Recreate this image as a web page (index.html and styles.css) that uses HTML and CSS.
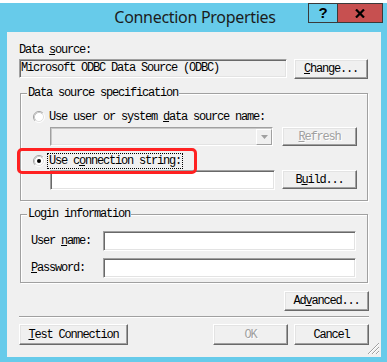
FILE: index.html
```html
<!DOCTYPE html>
<html lang="en">
<head>
    <meta charset="UTF-8">
    <meta name="viewport" content="width=device-width, initial-scale=1.0">
    <title>Connection Properties</title>
    <link rel="stylesheet" href="styles.css">
</head>
<body>
    <div class="topstrip"></div>
    <div class="titlebar">
        <div></div>
        <div class="title">Connection Properties</div>
        <div class="caption-btns">
            <div class="cap-help">?</div>
            <div class="cap-close">
                <svg width="10" height="9" viewBox="0 0 10 9"><path d="M1 0.5 L9 8.5 M9 0.5 L1 8.5" stroke="#000" stroke-width="2.2"/></svg>
            </div>
        </div>
    </div>

    <div class="client">
        <div class="label">Data <u>s</u>ource:</div>
        <div class="row ds-row">
            <div class="field readonly">Microsoft ODBC Data Source (ODBC)</div>
            <button class="btn btn-change"><u>C</u>hange...</button>
        </div>

        <div class="group spec">
            <span class="legend">Data source specification</span>
            <div class="radio-row">
                <svg class="radio" width="12" height="12" viewBox="0 0 12 12">
                    <circle cx="6" cy="6" r="5" fill="#fff"/>
                    <path d="M2.11 9.89 A5.5 5.5 0 0 1 9.89 2.11" stroke="#a0a0a0" fill="none"/>
                    <path d="M9.89 2.11 A5.5 5.5 0 0 1 2.11 9.89" stroke="#fff" fill="none"/>
                    <path d="M2.82 9.18 A4.5 4.5 0 0 1 9.18 2.82" stroke="#c8c8c8" fill="none"/>
                    <path d="M9.18 2.82 A4.5 4.5 0 0 1 2.82 9.18" stroke="#e3e3e3" fill="none"/>
                </svg>
                <span class="radio-text">Use user or system <u>d</u>ata source name:</span>
            </div>
            <div class="row sub-row">
                <div class="combo">
                    <span class="combo-btn">
                        <svg width="7" height="4" viewBox="0 0 7 4"><path d="M0 0 H7 L3.5 4 Z" fill="#a0a0a0"/></svg>
                    </span>
                </div>
                <button class="btn btn-side disabled"><u>R</u>efresh</button>
            </div>
            <div class="radio-row second">
                <svg class="radio" width="12" height="12" viewBox="0 0 12 12">
                    <circle cx="6" cy="6" r="5" fill="#fff"/>
                    <path d="M2.11 9.89 A5.5 5.5 0 0 1 9.89 2.11" stroke="#a0a0a0" fill="none"/>
                    <path d="M9.89 2.11 A5.5 5.5 0 0 1 2.11 9.89" stroke="#fff" fill="none"/>
                    <path d="M2.82 9.18 A4.5 4.5 0 0 1 9.18 2.82" stroke="#c8c8c8" fill="none"/>
                    <path d="M9.18 2.82 A4.5 4.5 0 0 1 2.82 9.18" stroke="#e3e3e3" fill="none"/>
                    <circle cx="6" cy="6" r="2" fill="#000"/>
                </svg>
                <span class="radio-text focus">Use c<u>o</u>nnection string:</span>
            </div>
            <div class="row sub-row conn-row">
                <div class="field conn-field"></div>
                <button class="btn btn-side">B<u>u</u>ild...</button>
            </div>
        </div>

        <div class="group login">
            <span class="legend">Login information</span>
            <div class="login-row">
                <span class="login-label">User <u>n</u>ame:</span>
                <div class="field login-field"></div>
            </div>
            <div class="login-row">
                <span class="login-label"><u>P</u>assword:</span>
                <div class="field login-field"></div>
            </div>
        </div>

        <div class="row adv-row">
            <button class="btn btn-adv">Ad<u>v</u>anced...</button>
        </div>

        <div class="separator"></div>

        <div class="row bottom-row">
            <button class="btn btn-test"><u>T</u>est Connection</button>
            <button class="btn btn-ok disabled">OK</button>
            <button class="btn btn-cancel">Cancel</button>
        </div>

        <!-- annotation drawn over the dialog -->
        <div class="highlight"></div>

        <svg class="grip" width="13" height="13" viewBox="0 0 13 13" shape-rendering="crispEdges">
            <path d="M12 1 L1 12 M12 5 L5 12 M12 9 L9 12" stroke="#a0a0a0"/>
            <path d="M12 2 L2 12 M12 6 L6 12 M12 10 L10 12" stroke="#fff"/>
        </svg>
    </div>
</body>
</html>
```

FILE: styles.css
```css
* {
    box-sizing: border-box;
}
body {
    margin: 0;
    width: 387px;
    height: 362px;
    overflow: hidden;
    background: #67cbea;
    font-family: "Liberation Mono", monospace;
    font-size: 12px;
    letter-spacing: -1.2px;
    color: #000;
}
.topstrip {
    height: 3px;
    background: #fff;
}
.titlebar {
    display: grid;
    grid-template-columns: 1fr auto 1fr;
    height: 29px;
    padding: 0 4px 0 7px;
}
.title {
    font-family: "Noto Sans", sans-serif;
    font-size: 16px;
    letter-spacing: -0.3px;
    line-height: 22px;
    padding-top: 3px;
    color: #1c1c1c;
}
.caption-btns {
    display: flex;
    justify-content: flex-end;
    align-items: flex-start;
}
.cap-help {
    width: 29px;
    height: 20px;
    border: 1px solid #3a3a3a;
    border-right: none;
    font-family: "Liberation Sans", sans-serif;
    font-weight: bold;
    font-size: 15px;
    letter-spacing: 0;
    line-height: 18px;
    text-align: center;
}
.cap-close {
    width: 46px;
    height: 20px;
    background: #c75050;
    border: 1px solid #3a3a3a;
    display: flex;
    align-items: center;
    justify-content: center;
}
.client {
    position: relative;
    width: 374px;
    height: 325px;
    margin-left: 7px;
    padding: 12px 12px 0;
    background: #f0f0f0;
}
.label {
    height: 13px;
    line-height: 13px;
}
.row {
    display: flex;
    align-items: flex-start;
}
.ds-row {
    margin-top: 2px;
    gap: 7px;
}
.field {
    height: 19px;
    background: #fff;
    border: 1px solid;
    border-color: #a0a0a0 #fff #fff #a0a0a0;
    box-shadow: inset 1px 1px 0 #696969, inset -1px -1px 0 #e3e3e3;
}
.readonly {
    width: 268px;
    background: #f0f0f0;
    padding-left: 1px;
    line-height: 15px;
    padding-top: 1px;
    white-space: nowrap;
}
.btn {
    display: flex;
    align-items: center;
    justify-content: center;
    height: 20px;
    padding: 0;
    margin: 0;
    font: inherit;
    letter-spacing: inherit;
    color: #000;
    background: #f0f0f0;
    border: 1px solid;
    border-color: #fff #696969 #696969 #fff;
    box-shadow: inset -1px -1px 0 #a0a0a0, inset 1px 1px 0 #e3e3e3;
}
.btn.disabled {
    color: #a0a0a0;
    text-shadow: 1px 1px 0 #fff;
}
.btn-change {
    width: 74px;
}
.group {
    position: relative;
    margin: 14px 1px 0;
    border: 1px solid #a0a0a0;
    box-shadow: inset 1px 1px 0 #fff, 1px 1px 0 #fff;
}
.legend {
    position: absolute;
    top: -8px;
    left: 6px;
    padding: 0 1px;
    line-height: 14px;
    background: #f0f0f0;
}
.spec {
    padding: 16px 0 10px;
}
.radio-row {
    display: flex;
    align-items: center;
    height: 14px;
    padding-left: 12px;
}
.radio-row.second {
    margin-top: 8px;
}
.radio {
    flex: none;
}
.radio-text {
    margin-left: 3px;
    padding: 0 1px;
    line-height: 14px;
}
.radio-text.focus {
    outline: 1px dotted #000;
}
.sub-row {
    margin-top: 3px;
    padding-left: 29px;
    gap: 9px;
}
.conn-row {
    margin-top: 2px;
    gap: 7px;
}
.combo {
    width: 223px;
    height: 19px;
    background: #f0f0f0;
    border: 1px solid;
    border-color: #a0a0a0 #fff #fff #a0a0a0;
    box-shadow: inset 1px 1px 0 #c8c8c8, inset -1px -1px 0 #e3e3e3;
    display: flex;
    justify-content: flex-end;
    padding: 1px 0 0 0;
}
.combo-btn {
    width: 16px;
    height: 16px;
    display: flex;
    align-items: center;
    justify-content: center;
    background: #f0f0f0;
    border: 1px solid;
    border-color: #fff #a0a0a0 #a0a0a0 #fff;
}
.btn-side {
    width: 75px;
    height: 19px;
}
.conn-field {
    width: 225px;
    height: 20px;
}
.login {
    margin-top: 13px;
    padding: 16px 11px 4px 10px;
}
.login-row {
    display: flex;
    height: 20px;
}
.login-row + .login-row {
    margin-top: 7px;
}
.login-label {
    width: 72px;
    line-height: 20px;
}
.login-field {
    width: 253px;
    height: 20px;
}
.adv-row {
    margin-top: 8px;
    justify-content: flex-end;
}
.btn-adv {
    width: 85px;
}
.separator {
    margin-top: 5px;
    height: 2px;
    border-top: 1px solid #a0a0a0;
    border-bottom: 1px solid #fff;
}
.bottom-row {
    margin-top: 6px;
}
.bottom-row .btn {
    height: 21px;
}
.btn-test {
    width: 109px;
}
.btn-ok {
    width: 75px;
    margin-left: auto;
}
.btn-cancel {
    width: 75px;
    margin-left: 6px;
}
.highlight {
    position: absolute;
    left: 10px;
    top: 116px;
    width: 180px;
    height: 26px;
    border: 3px solid #ff2121;
    border-radius: 5px;
}
.grip {
    position: absolute;
    right: 1px;
    bottom: 2px;
}
```
